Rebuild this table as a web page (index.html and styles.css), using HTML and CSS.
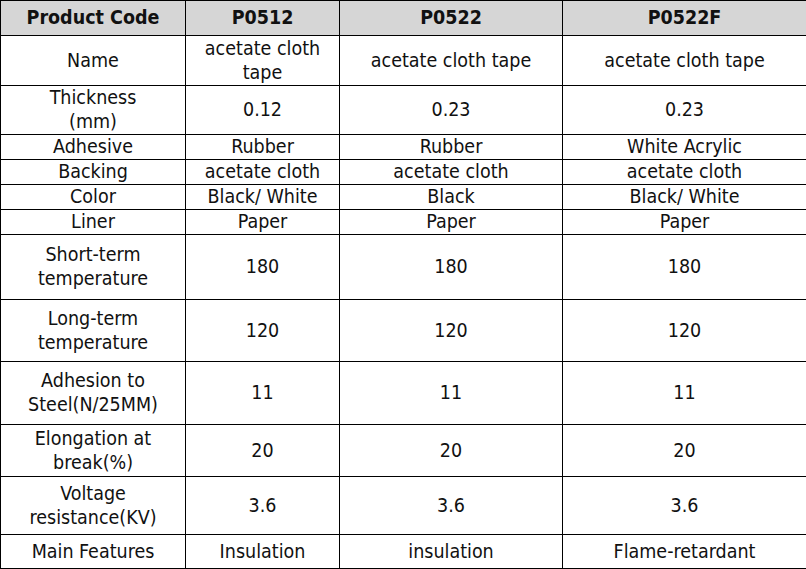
FILE: index.html
```html
<!DOCTYPE html>
<html>
<head>
<meta charset="utf-8">
<link rel="stylesheet" href="styles.css">
</head>
<body>
<table class="spec">
<colgroup>
<col class="c1"><col class="c2"><col class="c3"><col class="c4">
</colgroup>
<thead>
<tr class="h35 head"><th>Product Code</th><th>P0512</th><th>P0522</th><th>P0522F</th></tr>
</thead>
<tbody>
<tr class="h50"><td>Name</td><td>acetate cloth<br>tape</td><td>acetate cloth tape</td><td>acetate cloth tape</td></tr>
<tr class="h48"><td>Thickness<br>(mm)</td><td>0.12</td><td>0.23</td><td>0.23</td></tr>
<tr class="h25"><td>Adhesive</td><td>Rubber</td><td>Rubber</td><td>White Acrylic</td></tr>
<tr class="h25"><td>Backing</td><td>acetate cloth</td><td>acetate cloth</td><td>acetate cloth</td></tr>
<tr class="h25"><td>Color</td><td>Black/ White</td><td>Black</td><td>Black/ White</td></tr>
<tr class="h25"><td>Liner</td><td>Paper</td><td>Paper</td><td>Paper</td></tr>
<tr class="h65"><td>Short-term<br>temperature</td><td>180</td><td>180</td><td>180</td></tr>
<tr class="h62"><td>Long-term<br>temperature</td><td>120</td><td>120</td><td>120</td></tr>
<tr class="h63"><td>Adhesion to<br>Steel(N/25MM)</td><td>11</td><td>11</td><td>11</td></tr>
<tr class="h52"><td>Elongation at<br>break(%)</td><td>20</td><td>20</td><td>20</td></tr>
<tr class="h58"><td>Voltage<br>resistance(KV)</td><td>3.6</td><td>3.6</td><td>3.6</td></tr>
<tr class="h34"><td>Main Features</td><td>Insulation</td><td>insulation</td><td>Flame-retardant</td></tr>
</tbody>
</table>
</body>
</html>
```

FILE: styles.css
```css
html, body {
  margin: 0;
  padding: 0;
  background: #ffffff;
}
.spec {
  border-collapse: collapse;
  table-layout: fixed;
  width: 806px;
  font-family: "DejaVu Sans Condensed", "DejaVu Sans", sans-serif;
  font-size: 19.5px;
  line-height: 24px;
  color: #111111;
}
.c1 { width: 185px; }
.c2 { width: 154px; }
.c3 { width: 223px; }
.c4 { width: 244px; }
.spec th, .spec td {
  border: 1px solid #000000;
  padding: 0;
  text-align: center;
  vertical-align: middle;
}
.head th {
  background: #d6d6d6;
  font-weight: bold;
}
.h35 { height: 35px; }
.h50 { height: 50px; }
.h48 { height: 48px; }
.h25 { height: 25px; }
.h65 { height: 65px; }
.h62 { height: 62px; }
.h63 { height: 63px; }
.h52 { height: 52px; }
.h58 { height: 58px; }
.h34 { height: 34px; }
```
